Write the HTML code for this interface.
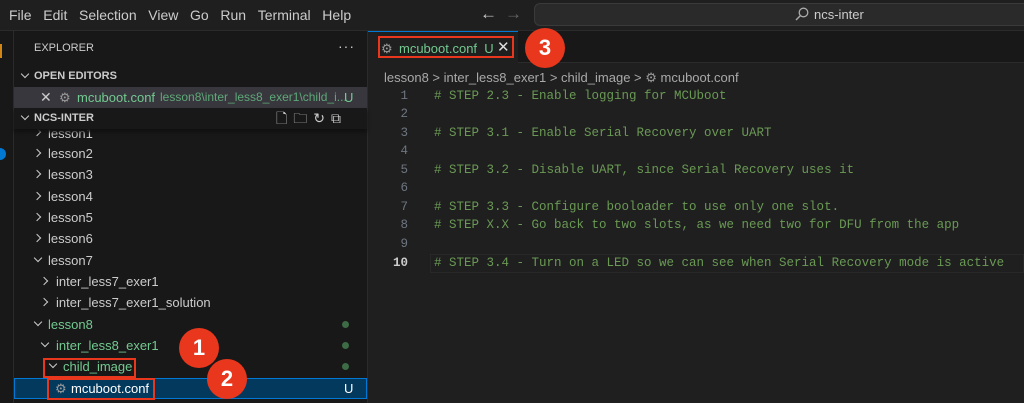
<!DOCTYPE html><html><head><style>
*{margin:0;padding:0;box-sizing:border-box}
body{width:1024px;height:403px;overflow:hidden;background:#1f1f1f;font-family:"Liberation Sans",sans-serif;color:#ccc;position:relative;font-size:13px}
.a{position:absolute;white-space:nowrap}
.g{color:#73c991}
.mono{font-family:"Liberation Mono",monospace;font-size:12.5px}
.row{position:absolute;left:14px;width:353px;height:21px;line-height:21px}
.row .t{position:absolute}
.chev{position:absolute;top:7px;width:6px;height:6px;border-right:1.3px solid #ccc;border-bottom:1.3px solid #ccc}
.cr{transform:rotate(-45deg)}
.cd{transform:rotate(45deg);top:5px}
.dot{position:absolute;right:18px;top:7px;width:7px;height:7px;border-radius:50%;background:#3d6b45}
.badge{position:absolute;width:40px;height:40px;border-radius:50%;background:#e8371c;color:#fff;font-weight:bold;font-size:22px;text-align:center;line-height:40px}
.box{position:absolute;border:2px solid #e8371c}
.ln{position:absolute;left:380px;width:28px;text-align:right;color:#6e7681}
.code{position:absolute;left:434px;color:#6a9955}
</style></head><body>
<div class="a" style="left:0;top:0;width:1024px;height:31px;background:#1f1f1f;border-bottom:1px solid #2b2b2b"></div>
<div class="a" style="left:9px;top:7px;font-size:14px;color:#ccc">File&nbsp;&nbsp;&nbsp;Edit&nbsp;&nbsp;&nbsp;Selection&nbsp;&nbsp;&nbsp;View&nbsp;&nbsp;&nbsp;Go&nbsp;&nbsp;&nbsp;Run&nbsp;&nbsp;&nbsp;Terminal&nbsp;&nbsp;&nbsp;Help</div>
<div class="a" style="left:480px;top:4px;font-size:17px;color:#ccc">←</div>
<div class="a" style="left:505px;top:4px;font-size:17px;color:#666">→</div>
<div class="a" style="left:534px;top:3px;width:500px;height:23px;background:#2a2a2a;border:1px solid #3a3a3a;border-radius:6px"></div>
<svg class="a" style="left:795px;top:7px" width="14" height="14"><circle cx="8.5" cy="5.5" r="4.3" fill="none" stroke="#aaa" stroke-width="1.3"/><line x1="5.5" y1="8.5" x2="1" y2="13" stroke="#aaa" stroke-width="1.4"/></svg>
<div class="a" style="left:814px;top:7px;color:#ccc">ncs-inter</div>
<div class="a" style="left:0;top:31px;width:14px;height:372px;background:#181818;border-right:1px solid #2b2b2b"></div>
<div class="a" style="left:0;top:44px;width:2px;height:14px;background:#d18616"></div>
<div class="a" style="left:-6px;top:148px;width:12px;height:12px;border-radius:50%;background:#0078d4"></div>
<div class="a" style="left:14px;top:31px;width:354px;height:372px;background:#181818;border-right:1px solid #2b2b2b"></div>
<div class="a" style="left:34px;top:42px;font-size:11px">EXPLORER</div>
<div class="a" style="left:338px;top:38px;font-size:14px;letter-spacing:1px">···</div>
<div class="row" style="top:66px;font-size:11px;font-weight:bold"><span class="chev cd" style="left:8px"></span><span class="t" style="left:20px">OPEN EDITORS</span></div>
<div class="row" style="top:87px;background:#37373d"><span class="t" style="left:26px;font-size:14px">✕</span><span class="t" style="left:45px;color:#9a9a9a">⚙</span><span class="t g" style="left:63px">mcuboot.conf</span><span class="t g" style="left:146px;font-size:12px;color:#5fa878">lesson8\inter_less8_exer1\child_i...</span><span class="t g" style="left:330px">U</span></div>
<div class="row" style="top:129px;height:12px;overflow:hidden"><span class="chev cr" style="left:20px;top:0px"></span><span class="t" style="left:34px;top:-6px">lesson1</span></div>
<div class="row" style="top:108px;background:#181818;font-size:11px;font-weight:bold;box-shadow:0 3px 3px #111"><span class="chev cd" style="left:8px"></span><span class="t" style="left:20px">NCS-INTER</span><span class="t" style="left:262px;font-size:14px;font-weight:normal;color:#ccc;letter-spacing:6px">🗋🗀↻⧉</span></div>
<div class="row" style="top:143px"><span class="chev cr" style="left:20px"></span><span class="t" style="left:34px">lesson2</span></div>
<div class="row" style="top:164px"><span class="chev cr" style="left:20px"></span><span class="t" style="left:34px">lesson3</span></div>
<div class="row" style="top:186px"><span class="chev cr" style="left:20px"></span><span class="t" style="left:34px">lesson4</span></div>
<div class="row" style="top:207px"><span class="chev cr" style="left:20px"></span><span class="t" style="left:34px">lesson5</span></div>
<div class="row" style="top:228px"><span class="chev cr" style="left:20px"></span><span class="t" style="left:34px">lesson6</span></div>
<div class="row" style="top:250px"><span class="chev cd" style="left:21px"></span><span class="t" style="left:34px">lesson7</span></div>
<div class="row" style="top:271px"><span class="chev cr" style="left:27px"></span><span class="t" style="left:42px">inter_less7_exer1</span></div>
<div class="row" style="top:292px"><span class="chev cr" style="left:27px"></span><span class="t" style="left:42px">inter_less7_exer1_solution</span></div>
<div class="row g" style="top:314px"><span class="chev cd" style="left:21px"></span><span class="t" style="left:34px">lesson8</span><span class="dot"></span></div>
<div class="row g" style="top:335px"><span class="chev cd" style="left:28px"></span><span class="t" style="left:42px">inter_less8_exer1</span><span class="dot"></span></div>
<div class="row g" style="top:356px"><span class="chev cd" style="left:36px"></span><span class="t" style="left:49px">child_image</span><span class="dot"></span></div>
<div class="row" style="top:378px;background:#04395e;border:1px solid #0078d4;color:#fff;line-height:19px"><span class="t" style="left:40px;color:#9a9a9a">⚙</span><span class="t" style="left:56px">mcuboot.conf</span><span class="t" style="left:329px">U</span></div>
<div class="box" style="left:43px;top:358px;width:93px;height:20px"></div>
<div class="box" style="left:47px;top:378px;width:108px;height:22px"></div>
<div class="badge" style="left:179px;top:328px">1</div>
<div class="badge" style="left:207px;top:359px">2</div>
<div class="a" style="left:368px;top:31px;width:656px;height:32px;background:#181818;border-bottom:1px solid #2b2b2b"></div>
<div class="a" style="left:368px;top:31px;width:150px;height:33px;background:#1f1f1f;border-top:1px solid #0078d4"></div>
<div class="a" style="left:381px;top:41px;color:#9a9a9a">⚙</div>
<div class="a g" style="left:399px;top:41px">mcuboot.conf&nbsp;&nbsp;U</div>
<div class="a" style="left:497px;top:38px;font-size:15px;color:#ddd">✕</div>
<div class="box" style="left:378px;top:36px;width:136px;height:22px"></div>
<div class="badge" style="left:525px;top:28px">3</div>
<div class="a" style="left:384px;top:70px;color:#a9a9a9">lesson8 &gt; inter_less8_exer1 &gt; child_image &gt; <span style="color:#9a9a9a">⚙</span> mcuboot.conf</div>
<div class="a" style="left:430px;top:254px;width:594px;height:19px;border:1px solid #282828"></div>
<div class="mono">
<div class="ln a" style="top:89px">1</div><div class="code a" style="top:89px"># STEP 2.3 - Enable logging for MCUboot</div>
<div class="ln a" style="top:107px">2</div>
<div class="ln a" style="top:126px">3</div><div class="code a" style="top:126px"># STEP 3.1 - Enable Serial Recovery over UART</div>
<div class="ln a" style="top:144px">4</div>
<div class="ln a" style="top:163px">5</div><div class="code a" style="top:163px"># STEP 3.2 - Disable UART, since Serial Recovery uses it</div>
<div class="ln a" style="top:181px">6</div>
<div class="ln a" style="top:200px">7</div><div class="code a" style="top:200px"># STEP 3.3 - Configure booloader to use only one slot.</div>
<div class="ln a" style="top:218px">8</div><div class="code a" style="top:218px"># STEP X.X - Go back to two slots, as we need two for DFU from the app</div>
<div class="ln a" style="top:237px">9</div>
<div class="ln a" style="top:256px;color:#ccc;font-weight:bold">10</div><div class="code a" style="top:256px"># STEP 3.4 - Turn on a LED so we can see when Serial Recovery mode is active</div>
</div>
</body></html>
